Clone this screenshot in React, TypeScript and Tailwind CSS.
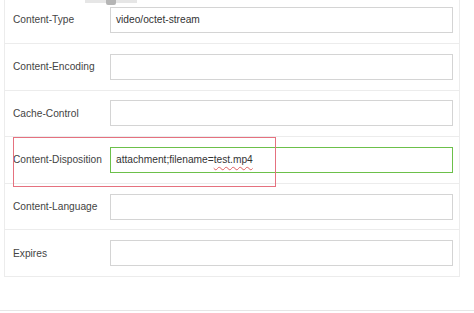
const rows = [
  { label: 'Content-Type', value: 'video/octet-stream' },
  { label: 'Content-Encoding', value: '' },
  { label: 'Cache-Control', value: '' },
  { label: 'Content-Disposition', value: 'attachment;filename=', typo: 'test.mp4', active: true },
  { label: 'Content-Language', value: '' },
  { label: 'Expires', value: '' },
]

function HeaderRow({ label, value, typo, active }: { label: string; value: string; typo?: string; active?: boolean }) {
  return (
    <div className="flex items-center h-[46.6px] border-t border-[#ececec] first:border-t-0">
      <div className="w-[105px] shrink-0 pl-2 whitespace-nowrap text-[#444]">{label}</div>
      <div
        className={`flex items-center w-[343px] h-[26px] px-[5px] whitespace-nowrap border ${
          active ? 'border-[#6cc04a]' : 'border-[#d4d4d4]'
        } text-[#333]`}
      >
        <span>{value}</span>
        {typo && (
          <span className="underline decoration-wavy decoration-1 decoration-[#e06060] underline-offset-[3px]">{typo}</span>
        )}
      </div>
    </div>
  )
}

export default function App() {
  return (
    <div className="relative w-[474px] h-[313px] overflow-hidden bg-white text-[10.2px] font-['Liberation_Sans',Arial,sans-serif]">
      {/* cut-off tooltip at the top */}
      <div className="absolute left-[85px] top-0 w-[52px] h-[3px] bg-[#e6e6e6]" />
      <div className="absolute left-[106px] top-0 w-[10px] h-[5px] rounded-b-[2px] bg-[#b5b5b5]" />

      <div className="ml-[4px] mt-[-4.6px] w-[456px] border border-[#ececec]">
        {rows.map((r) => (
          <HeaderRow key={r.label} {...r} />
        ))}
      </div>

      <div className="mt-[33px] border-t border-[#e6e6e6]" />

      {/* annotation box */}
      <div className="absolute left-[13px] top-[137px] w-[263px] h-[50px] border border-[#e5717f]" />
    </div>
  )
}
